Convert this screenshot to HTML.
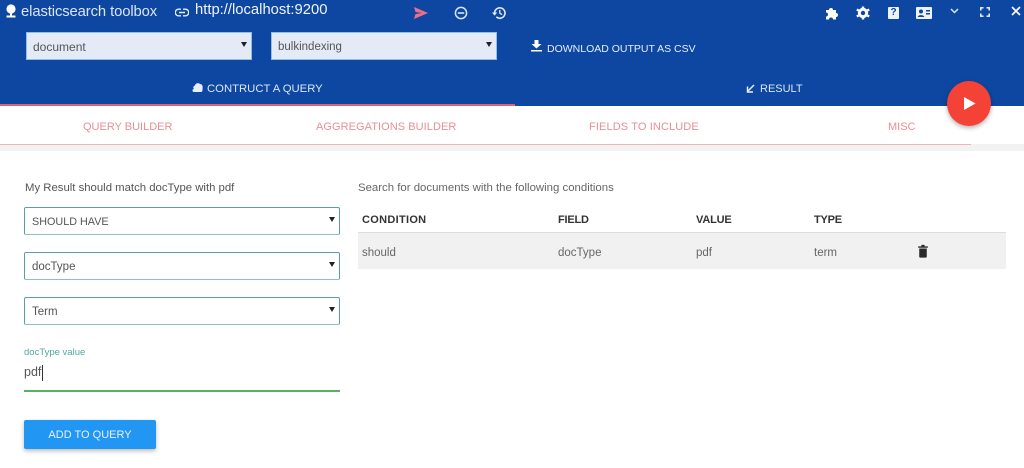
<!DOCTYPE html>
<html><head><meta charset="utf-8"><style>
html,body{margin:0;padding:0;width:1024px;height:468px;overflow:hidden;background:#fff;font-family:"Liberation Sans",sans-serif}
#w{position:absolute;left:0;top:0;width:1024px;height:468px;overflow:hidden;filter:blur(.3px)}
.a{position:absolute;white-space:nowrap}
svg{position:absolute;display:block}
.sel{position:absolute;box-sizing:border-box;font-size:11.5px;color:#555}
.sel .t{position:absolute;white-space:nowrap}
.arrow{position:absolute;width:0;height:0;border-left:3px solid transparent;border-right:3px solid transparent;border-top:5px solid #222}
.tab{color:#e88f95;font-size:11px;top:121px}
.th{font-weight:bold;font-size:11px;color:#333;top:214px}
.td{font-size:11.5px;color:#666;top:247px}
.wh{fill:#fff}
.f{background:#fff;border:1px solid #5f9ea0;border-bottom-color:#8fc0c0;border-radius:2px}
</style></head><body><div id="w">
<div class="a" style="left:0;top:0;width:1024px;height:106px;background:#0d47a1"></div>
<div class="a" style="left:0;top:104px;width:515px;height:2px;background:#e0626e"></div>
<div class="a" style="left:0;top:144px;width:971px;height:1px;background:#f0b4b8"></div>
<div class="a" style="left:0;top:145px;width:1024px;height:6px;background:#f2f2f2"></div>
<div class="a" style="left:971px;top:144px;width:53px;height:1px;background:#f2f2f2"></div>

<svg style="left:5px;top:4px" width="12" height="15" viewBox="0 0 12 15"><circle class="wh" cx="6" cy="5" r="4.6"/><rect class="wh" x="5" y="9" width="2" height="3"/><rect class="wh" x="1.5" y="11.5" width="9" height="2"/></svg>
<div class="a" style="left:21px;top:4px;font-size:14.8px;color:#dce6f5;letter-spacing:-.1px">elasticsearch toolbox</div>
<svg style="left:175px;top:8px" width="14" height="9" viewBox="0 0 14 9"><path d="M6 1.2H3.6a3.3 3.3 0 0 0 0 6.6H6M8 1.2h2.4a3.3 3.3 0 0 1 0 6.6H8M4 4.5h6" fill="none" stroke="#e3ecf8" stroke-width="1.4"/></svg>
<div class="a" style="left:195px;top:2px;font-size:14.8px;color:#f0f4fb">http://localhost:9200</div>
<svg style="left:414px;top:7px" width="14" height="12" viewBox="0 0 14 12"><path d="M0 0L14 6L0 12L1.5 7L8 6L1.5 5Z" fill="#ee6f8a"/></svg>
<svg style="left:454px;top:6px" width="14" height="14" viewBox="0 0 14 14"><circle cx="7" cy="7" r="5.6" fill="none" stroke="#d6e4f7" stroke-width="1.5"/><rect x="3.8" y="6.2" width="6.4" height="1.6" fill="#d6e4f7"/></svg>
<svg style="left:492px;top:6px" width="15" height="14" viewBox="0 0 15 14"><path d="M2.6 7a5.2 5.2 0 1 1 1.7 3.9" fill="none" stroke="#e3ecf8" stroke-width="1.6"/><path d="M0 6.5h5.2L2.6 9.6Z" fill="#e3ecf8"/><path d="M7.8 4v3.3l2.4 1.3" fill="none" stroke="#e3ecf8" stroke-width="1.3"/></svg>

<svg style="left:825px;top:6px" width="14" height="14" viewBox="0 0 14 14"><path class="wh" d="M1 4h3a2 2 0 1 1 4 0h3v3a2 2 0 1 1 0 4v2.500H8a2 2 0 1 0-4 0H1v-3a2 2 0 1 0 0-4Z"/></svg>
<svg style="left:856px;top:6px" width="14" height="14" viewBox="0 0 14 14"><circle cx="7" cy="7" r="3.700" fill="none" stroke="#fff" stroke-width="3"/><path d="M7 0.500v2M7 11.500v2M0.800 3.500l1.800 1M11.400 9.500l1.800 1M0.800 10.500l1.800-1M11.400 4.500l1.800-1" stroke="#fff" stroke-width="2.400"/></svg>
<div class="a" style="left:888px;top:7px;width:11px;height:12px;background:#eef3fb;border-radius:1px;color:#0d47a1;font-size:10px;font-weight:bold;line-height:12px;text-align:center">?</div>
<svg style="left:916px;top:7px" width="16" height="12" viewBox="0 0 16 12"><rect width="16" height="12" rx="1" fill="#eef3fb"/><circle cx="5" cy="4.500" r="2" fill="#0d47a1"/><path d="M1.800 10c0-2.500 6.400-2.500 6.400 0Z" fill="#0d47a1"/><rect x="10" y="3" width="4" height="1.500" fill="#0d47a1"/><rect x="10" y="6" width="4" height="1.500" fill="#0d47a1"/></svg>
<svg style="left:950px;top:8px" width="9" height="6" viewBox="0 0 9 6"><path d="M1 1l3.500 3.500L8 1" fill="none" stroke="#dbe6f6" stroke-width="1.500"/></svg>
<svg style="left:980px;top:7px" width="10" height="10" viewBox="0 0 10 10"><path d="M.8 3.500V.8h2.700M6.500.8h2.700v2.700M9.200 6.500v2.700H6.500M3.500 9.200H.8V6.500" fill="none" stroke="#fff" stroke-width="1.400"/></svg>
<svg style="left:1011px;top:6px" width="10" height="10" viewBox="0 0 10 10"><path d="M1 1l8 8M9 1l-8 8" stroke="#fff" stroke-width="1.700"/></svg>

<div class="sel" style="left:26px;top:32px;width:226px;height:28px;background:#e4ebf6;border:1px solid #8cc0e6"><span class="t" style="left:6px;top:7px;font-size:12px">document</span><i class="arrow" style="left:214px;top:9px"></i></div>
<div class="sel" style="left:271px;top:32px;width:226px;height:28px;background:#e4ebf6;border:1px solid #8cc0e6"><span class="t" style="left:6px;top:8px">bulkindexing</span><i class="arrow" style="left:214px;top:9px"></i></div>
<svg style="left:531px;top:40px" width="11" height="12" viewBox="0 0 11 12"><path class="wh" d="M3.500 0h4v4h3L5.500 8.500L.5 4h3Z"/><rect class="wh" y="10" width="11" height="1.500"/></svg>
<div class="a" style="left:547px;top:43px;font-size:10.500px;line-height:13px;color:#e6eefa">DOWNLOAD OUTPUT AS CSV</div>

<svg style="left:192px;top:83px" width="11" height="10" viewBox="0 0 11 10"><path d="M3 2.500a3 3 0 0 1 5-1.500c2.500 0 3 3 2.500 5a3 3 0 0 1-1 3H2a1.500 1.500 0 0 1 0-3a2 2 0 0 1 1-3.500Z" fill="#e6eefa"/></svg>
<div class="a" style="left:207px;top:83px;font-size:11.300px;color:#dce6f5;line-height:13px">CONTRUCT A QUERY</div>
<svg style="left:746px;top:84px" width="9" height="9" viewBox="0 0 9 9"><path d="M8 1L2 7M1.500 2.500v5.500h5.500" fill="none" stroke="#e6eefa" stroke-width="1.500"/></svg>
<div class="a" style="left:760px;top:83px;font-size:11px;color:#dce6f5;line-height:13px">RESULT</div>

<div class="a tab" style="left:83px">QUERY BUILDER</div>
<div class="a tab" style="left:316px;letter-spacing:.06px">AGGREGATIONS BUILDER</div>
<div class="a tab" style="left:589px;letter-spacing:.12px">FIELDS TO INCLUDE</div>
<div class="a tab" style="left:888px">MISC</div>

<div class="a" style="left:947px;top:81px;width:44px;height:45px;border-radius:50%;background:#f44336;box-shadow:0 2px 5px rgba(0,0,0,.3)"></div>
<svg style="left:963px;top:97px" width="13" height="13" viewBox="0 0 13 13"><path class="wh" d="M1 0L12.500 6.500L1 13Z"/></svg>

<div class="a" style="left:25px;top:182px;font-size:11.350px;line-height:13px;color:#555">My Result should match docType with pdf</div>

<div class="sel f" style="left:24px;top:207px;width:316px;height:28px"><span class="t" style="left:7px;top:8px;font-size:10.800px">SHOULD HAVE</span><i class="arrow" style="left:304px;top:9px"></i></div>
<div class="sel f" style="left:24px;top:252px;width:316px;height:28px"><span class="t" style="left:7px;top:8px">docType</span><i class="arrow" style="left:304px;top:9px"></i></div>
<div class="sel f" style="left:24px;top:297px;width:316px;height:28px"><span class="t" style="left:7px;top:8px">Term</span><i class="arrow" style="left:304px;top:9px"></i></div>

<div class="a" style="left:24px;top:347px;font-size:9.500px;color:#4fa8a0">docType value</div>
<div class="a" style="left:24px;top:365px;font-size:12.500px;color:#555">pdf</div>
<div class="a" style="left:42px;top:365px;width:1px;height:16px;background:#333"></div>
<div class="a" style="left:24px;top:390px;width:316px;height:2px;background:#5cae64"></div>

<div class="a" style="left:24px;top:420px;width:132px;height:29px;background:#2196f3;border-radius:2px;box-shadow:0 2px 4px rgba(0,0,0,.28);color:#e8f3fe;font-size:11px;line-height:31px;text-align:center">ADD TO QUERY</div>

<div class="a" style="left:358px;top:182px;font-size:11.400px;line-height:13px;color:#666">Search for documents with the following conditions</div>
<div class="a th" style="left:362px;letter-spacing:.3px">CONDITION</div>
<div class="a th" style="left:558px;letter-spacing:-.2px">FIELD</div>
<div class="a th" style="left:696px;letter-spacing:-.2px">VALUE</div>
<div class="a th" style="left:814px;letter-spacing:-.2px">TYPE</div>
<div class="a" style="left:358px;top:232px;width:648px;height:37px;background:#f1f1f1;border-top:1px solid #ddd;box-sizing:border-box"></div>
<div class="a td" style="left:362px">should</div>
<div class="a td" style="left:558px">docType</div>
<div class="a td" style="left:696px">pdf</div>
<div class="a td" style="left:814px">term</div>
<svg style="left:917px;top:244px" width="12" height="14" viewBox="0 0 11 13"><path d="M1 2.200h9v1.300H1ZM4 .8h3v1.500H4ZM2 4.200h7v7.500a1 1 0 0 1-1 1H3a1 1 0 0 1-1-1Z" fill="#2a2a2a"/></svg>
</div></body></html>
